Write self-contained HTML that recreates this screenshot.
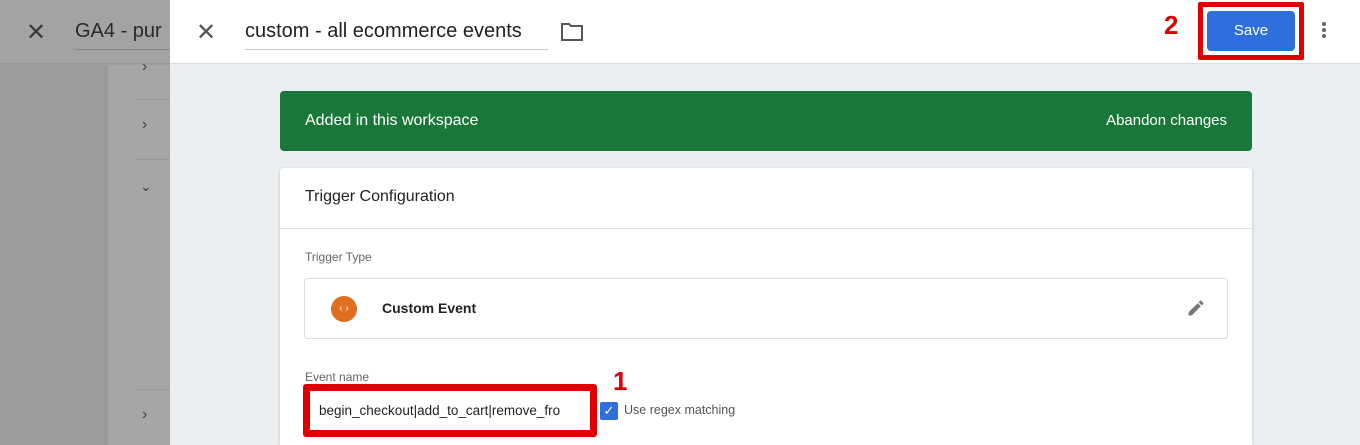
<!DOCTYPE html>
<html style="width:1360px;height:445px;overflow:hidden"><head><style>
*{box-sizing:border-box;margin:0;padding:0}
body{width:1360px;height:445px;overflow:hidden;font-family:"Liberation Sans",sans-serif;background:#9e9e9e;position:relative}
.abs{position:absolute}
</style></head><body>
<div class="abs" style="left:0;top:0;width:170px;height:64px;background:#a3a3a3;border-bottom:1px solid #999"></div>
<div class="abs" style="left:26px;top:18px;font-size:24px;color:#3a3a3a">✕</div>
<div class="abs" style="left:75px;top:20px;font-size:20px;color:#2a2a2a">GA4 - pur</div>
<div class="abs" style="left:75px;top:49px;width:95px;height:1px;background:#888"></div>
<div class="abs" style="left:0;top:65px;width:108px;height:380px;background:#9b9b9b"></div>
<div class="abs" style="left:108px;top:65px;width:62px;height:380px;background:#a6a6a6"></div>
<div class="abs" style="left:135px;top:99px;width:35px;height:1px;background:#999"></div>
<div class="abs" style="left:135px;top:159px;width:35px;height:1px;background:#999"></div>
<div class="abs" style="left:135px;top:389px;width:35px;height:1px;background:#999"></div>
<div class="abs" style="left:142px;top:58px;font-size:16px;color:#444">›</div>
<div class="abs" style="left:142px;top:116px;font-size:16px;color:#444">›</div>
<div class="abs" style="left:140px;top:178px;font-size:14px;color:#444">⌄</div>
<div class="abs" style="left:142px;top:406px;font-size:16px;color:#444">›</div>
<div class="abs" style="left:170px;top:0;width:1190px;height:445px;background:#eceff1"></div>
<div class="abs" style="left:170px;top:0;width:1190px;height:64px;background:#fff;border-bottom:1px solid #ddd"></div>
<div class="abs" style="left:196px;top:18px;font-size:24px;color:#555">✕</div>
<div class="abs" style="left:245px;top:20px;font-size:20px;color:#222">custom - all ecommerce events</div>
<div class="abs" style="left:245px;top:49px;width:303px;height:1px;background:#ccc"></div>
<svg class="abs" style="left:561px;top:22px" width="22" height="20" viewBox="0 0 22 20"><path d="M1 2h7l2 2h11v14H1z" fill="none" stroke="#555" stroke-width="2"/></svg>
<div class="abs" style="left:1164px;top:10px;font-size:26px;font-weight:bold;color:#e00000;background:#fff">2</div>
<div class="abs" style="left:1198px;top:2px;width:106px;height:58px;border:5px solid #e00000;border-radius:2px;background:#fff"></div>
<div class="abs" style="left:1207px;top:11px;width:88px;height:40px;background:#2f6fdb;border-radius:4px;color:#fff;font-size:15px;text-align:center;line-height:40px">Save</div>
<div class="abs" style="left:1322px;top:22px;width:4px;height:4px;border-radius:2px;background:#666;box-shadow:0 6px 0 #666,0 12px 0 #666"></div>
<div class="abs" style="left:280px;top:91px;width:972px;height:60px;background:#19773a;border-radius:4px;color:#fff;font-size:16px;line-height:60px;padding:0 25px">Added in this workspace<span style="float:right;font-size:15px">Abandon changes</span></div>
<div class="abs" style="left:280px;top:168px;width:972px;height:277px;background:#fff;border-radius:4px 4px 0 0;box-shadow:0 1px 3px rgba(0,0,0,.2)"></div>
<div class="abs" style="left:305px;top:188px;font-size:16px;color:#222">Trigger Configuration</div>
<div class="abs" style="left:280px;top:228px;width:972px;height:1px;background:#e0e0e0"></div>
<div class="abs" style="left:305px;top:250px;font-size:12px;color:#666">Trigger Type</div>
<div class="abs" style="left:304px;top:278px;width:924px;height:61px;border:1px solid #ddd;border-radius:4px"></div>
<div class="abs" style="left:331px;top:296px;width:26px;height:26px;border-radius:13px;background:#e07020;color:#fff;font-size:10px;text-align:center;line-height:26px">‹ ›</div>
<div class="abs" style="left:382px;top:300px;font-size:14px;font-weight:bold;color:#222">Custom Event</div>
<svg class="abs" style="left:1186px;top:298px" width="20" height="20" viewBox="0 0 24 24"><path d="M3 17.25V21h3.75L17.8 9.94l-3.75-3.75zM20.7 7.04a1 1 0 000-1.41l-2.34-2.34a1 1 0 00-1.41 0l-1.83 1.83 3.75 3.75z" fill="#777"/></svg>
<div class="abs" style="left:305px;top:370px;font-size:12px;color:#666">Event name</div>
<div class="abs" style="left:303px;top:384px;width:294px;height:53px;border:7px solid #e00000;border-radius:3px;background:#fff;font-size:13.5px;color:#222;padding:12px 0 0 9px;white-space:nowrap;overflow:hidden">begin_checkout|add_to_cart|remove_fro</div>
<div class="abs" style="left:613px;top:366px;font-size:26px;font-weight:bold;color:#e00000">1</div>
<div class="abs" style="left:600px;top:402px;width:18px;height:18px;background:#2f6fdb;border-radius:2px;color:#fff;font-size:13px;text-align:center;line-height:18px">✓</div>
<div class="abs" style="left:624px;top:403px;font-size:12.5px;color:#555">Use regex matching</div>
</body></html>
